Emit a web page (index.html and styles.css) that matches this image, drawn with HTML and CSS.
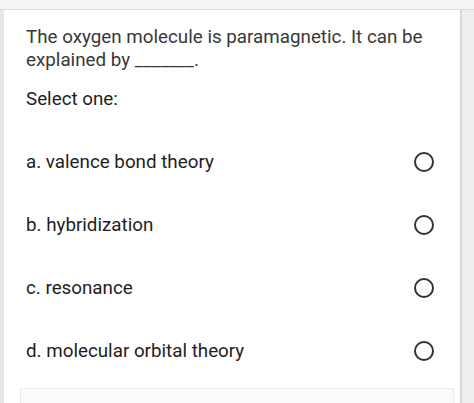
FILE: index.html
```html
<!DOCTYPE html>
<html>
<head>
<meta charset="utf-8">
<link rel="stylesheet" href="styles.css">
</head>
<body>
<div class="top-bar"></div>
<div class="main">
  <div class="left-edge"></div>
  <div class="card">
    <div class="question">The oxygen molecule is paramagnetic. It can be explained by _______.</div>
    <div class="prompt">Select one:</div>
    <div class="options">
      <div class="option"><span class="label">a. valence bond theory</span><span class="radio"></span></div>
      <div class="option"><span class="label">b. hybridization</span><span class="radio"></span></div>
      <div class="option"><span class="label">c. resonance</span><span class="radio"></span></div>
      <div class="option"><span class="label">d. molecular orbital theory</span><span class="radio"></span></div>
    </div>
    <div class="next-box"></div>
  </div>
  <div class="right-edge"></div>
</div>
</body>
</html>
```
FILE: styles.css
```css
html, body {
  margin: 0;
  padding: 0;
  background: #f3f3f3;
  font-family: Roboto, "Liberation Sans", sans-serif;
  overflow: hidden;
}
.top-bar {
  height: 9px;
  background: #f4f4f4;
  border-bottom: 1px solid #dcdcdc;
}
.main {
  display: flex;
  height: 393px;
}
.left-edge {
  width: 4px;
  background: #e6e6e6;
}
.card {
  width: 456px;
  background: #ffffff;
  padding: 0 0 0 22px;
  box-sizing: border-box;
  display: flex;
  flex-direction: column;
}
.right-edge {
  width: 14px;
  background: #efefef;
  border-left: 2px solid #d6d6d6;
  box-sizing: border-box;
}
.question {
  margin-top: 16px;
  font-size: 18.8px;
  line-height: 23px;
  color: #383838;
  width: 420px;
}
.prompt {
  margin-top: 16px;
  font-size: 18.8px;
  line-height: 23px;
  color: #1e1e1e;
}
.options {
  margin-top: 30px;
  display: flex;
  flex-direction: column;
}
.option {
  height: 63px;
  display: flex;
  align-items: center;
  justify-content: space-between;
  padding-right: 26px;
  font-size: 18.8px;
  color: #1e1e1e;
}
.option .label {
  margin-top: -22px;
}
.radio {
  width: 16px;
  height: 16px;
  border: 2.5px solid #333333;
  border-radius: 50%;
  margin-top: -22px;
}
.next-box {
  margin-top: -5px;
  margin-left: -6px;
  width: 432px;
  flex: 1;
  background: #fbfbfb;
  border: 1px solid #ececec;
  border-bottom: none;
}
```
